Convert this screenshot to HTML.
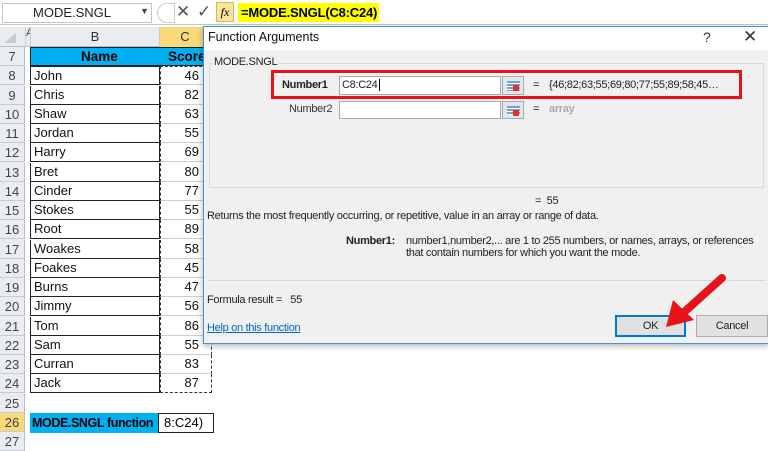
<!DOCTYPE html>
<html><head><meta charset="utf-8"><style>
*{margin:0;padding:0;box-sizing:border-box}
body{width:768px;height:440px;overflow:hidden;background:#fff;font-family:"Liberation Sans",sans-serif;position:relative}
.a{position:absolute;white-space:nowrap}
.rn{position:absolute;left:0;width:25px;height:19px;background:#e9edf2;color:#444;font-size:13px;text-align:center;line-height:19px;border-bottom:1px solid #c8ccd2;border-right:1px solid #b8bcc2}
.nm{position:absolute;left:30px;width:130px;height:19px;border:1px solid #222;border-top:none;font-size:13px;line-height:18px;padding-left:3px;color:#111}
.sc{position:absolute;left:160px;width:52px;height:19px;border-right:1px dashed #333;border-left:1px dashed #333;border-bottom:1px solid #ccc;font-size:13px;line-height:18px;text-align:right;padding-right:12px;color:#111}
.dl{font-family:"Liberation Sans",sans-serif;font-size:11px;letter-spacing:-0.3px;color:#222}
</style></head><body>
<!-- formula bar -->
<div class="a" style="left:0;top:0;width:768px;height:25px;background:#fff;border-bottom:1px solid #c6c6c6"></div>
<div class="a" style="left:2px;top:3px;width:150px;height:20px;border:1px solid #c6c6c6;font-size:13px;line-height:18px;padding-left:30px;color:#222">MODE.SNGL</div>
<div class="a" style="left:140px;top:6px;font-size:9px;color:#444">▼</div>
<div class="a" style="left:157px;top:3px;width:18px;height:20px;border:1px solid #ccc;border-radius:10px 0 0 10px"></div>
<div class="a" style="left:176px;top:2px;font-size:17px;color:#555">✕</div>
<div class="a" style="left:197px;top:2px;font-size:17px;color:#555">✓</div>
<div class="a" style="left:216px;top:2px;width:18px;height:20px;background:#f7e59c;border:1px solid #d0b860;font-family:'Liberation Serif',serif;font-style:italic;font-size:12px;line-height:18px;text-align:center">fx</div>
<div class="a" style="left:238px;top:3px;width:141px;height:19px;background:#ffff00;font-weight:bold;font-size:13px;line-height:19px;padding-left:3px;letter-spacing:-0.2px">=MODE.SNGL(C8:C24)</div>
<!-- column headers -->
<div class="a" style="left:0;top:27px;width:768px;height:20px;background:#e9edf2;border-bottom:1px solid #b8bcc2"></div>
<div class="a" style="left:25px;top:27px;width:5px;height:20px;border-left:1px solid #c8ccd2;font-size:11px;color:#444;overflow:hidden">A</div>
<div class="a" style="left:30px;top:27px;width:130px;height:20px;border-left:1px solid #c8ccd2;border-right:1px solid #c8ccd2;font-size:13px;line-height:20px;text-align:center;color:#333">B</div>
<div class="a" style="left:160px;top:27px;width:50px;height:20px;background:#f9d97a;font-size:13px;line-height:20px;text-align:center;color:#333">C</div>
<div class="a" style="left:4px;top:33px;width:0;height:0;border-left:12px solid transparent;border-bottom:10px solid #c8ccd2"></div>
<div class="a" style="left:0;top:47px;width:25px;height:393px;background:#e9edf2"></div>
<!-- rows -->
<div class="rn" style="top:47px">7</div>
<div class="a" style="left:30px;top:47px;width:182px;height:19px;background:#00b0f0;border:1px solid #222;font-weight:bold;font-size:13.5px;line-height:18px"><span style="position:absolute;left:50px">Name</span><span style="position:absolute;left:137px">Score</span></div>
<div class="rn" style="top:66px">8</div><div class="nm" style="top:66px;border-top:1px solid #222">John</div><div class="sc" style="top:66px;border-top:1px dashed #333">46</div>
<div class="rn" style="top:86px">9</div><div class="nm" style="top:86px">Chris</div><div class="sc" style="top:86px">82</div>
<div class="rn" style="top:105px">10</div><div class="nm" style="top:105px">Shaw</div><div class="sc" style="top:105px">63</div>
<div class="rn" style="top:124px">11</div><div class="nm" style="top:124px">Jordan</div><div class="sc" style="top:124px">55</div>
<div class="rn" style="top:143px">12</div><div class="nm" style="top:143px">Harry</div><div class="sc" style="top:143px">69</div>
<div class="rn" style="top:163px">13</div><div class="nm" style="top:163px">Bret</div><div class="sc" style="top:163px">80</div>
<div class="rn" style="top:182px">14</div><div class="nm" style="top:182px">Cinder</div><div class="sc" style="top:182px">77</div>
<div class="rn" style="top:201px">15</div><div class="nm" style="top:201px">Stokes</div><div class="sc" style="top:201px">55</div>
<div class="rn" style="top:220px">16</div><div class="nm" style="top:220px">Root</div><div class="sc" style="top:220px">89</div>
<div class="rn" style="top:240px">17</div><div class="nm" style="top:240px">Woakes</div><div class="sc" style="top:240px">58</div>
<div class="rn" style="top:259px">18</div><div class="nm" style="top:259px">Foakes</div><div class="sc" style="top:259px">45</div>
<div class="rn" style="top:278px">19</div><div class="nm" style="top:278px">Burns</div><div class="sc" style="top:278px">47</div>
<div class="rn" style="top:297px">20</div><div class="nm" style="top:297px">Jimmy</div><div class="sc" style="top:297px">56</div>
<div class="rn" style="top:317px">21</div><div class="nm" style="top:317px">Tom</div><div class="sc" style="top:317px">86</div>
<div class="rn" style="top:336px">22</div><div class="nm" style="top:336px">Sam</div><div class="sc" style="top:336px">55</div>
<div class="rn" style="top:355px">23</div><div class="nm" style="top:355px">Curran</div><div class="sc" style="top:355px">83</div>
<div class="rn" style="top:374px">24</div><div class="nm" style="top:374px">Jack</div><div class="sc" style="top:374px;border-bottom:1px dashed #333">87</div>
<div class="rn" style="top:394px">25</div>
<div class="rn" style="top:413px;background:#f9d97a">26</div>
<div class="rn" style="top:432px">27</div>
<div class="a" style="left:30px;top:413px;width:128px;height:20px;background:#00b0f0;font-weight:bold;font-size:12.5px;line-height:20px;padding-left:2px;letter-spacing:-0.4px;overflow:hidden">MODE.SNGL function</div>
<div class="a" style="left:158px;top:413px;width:56px;height:20px;border:1px solid #222;font-size:13px;line-height:18px;padding-left:5px">8:C24)</div>
<!-- dialog -->
<div class="a" style="left:203px;top:26px;width:566px;height:318px;background:#f0f0f0;border:1px solid #4a90d9;box-shadow:0 2px 6px rgba(0,0,0,.3)"></div>
<div class="a" style="left:204px;top:27px;width:564px;height:23px;background:#fff"></div>
<div class="a" style="left:208px;top:30px;font-size:12.5px;color:#111">Function Arguments</div>
<div class="a" style="left:703px;top:29px;font-size:14px;color:#333">?</div>
<div class="a" style="left:743px;top:27px;font-size:17px;color:#333">✕</div>
<div class="a" style="left:209px;top:63px;width:555px;height:125px;border:1px solid #d8d8d8"></div>
<div class="a dl" style="left:212px;top:56px;background:#f0f0f0;padding:0 2px">MODE.SNGL</div>
<div class="a" style="left:271px;top:70px;width:471px;height:29px;border:3px solid #e8121a"></div>
<div class="a dl" style="left:282px;top:79px;font-weight:bold">Number1</div>
<div class="a" style="left:339px;top:76px;width:162px;height:19px;background:#fff;border:1px solid #aaa"></div>
<div class="a dl" style="left:342px;top:79px">C8:C24<span style="border-left:1px solid #000;margin-left:1px"></span></div>
<div class="a" style="left:502px;top:76px;width:22px;height:19px;background:#dfe6ee;border:1px solid #aaa"><div style="margin:4px 4px;width:13px;height:10px;background:repeating-linear-gradient(#7aa0c8 0 2px,#fff 2px 3px)"></div><div style="position:absolute;left:10px;top:8px;width:6px;height:6px;background:#d33"></div></div>
<div class="a dl" style="left:533px;top:79px">=</div>
<div class="a dl" style="left:549px;top:79px">{46;82;63;55;69;80;77;55;89;58;45…</div>
<div class="a dl" style="left:289px;top:103px;color:#333">Number2</div>
<div class="a" style="left:339px;top:101px;width:162px;height:18px;background:#fff;border:1px solid #aaa"></div>
<div class="a" style="left:502px;top:101px;width:22px;height:18px;background:#dfe6ee;border:1px solid #aaa"><div style="margin:4px 4px;width:13px;height:9px;background:repeating-linear-gradient(#7aa0c8 0 2px,#fff 2px 3px)"></div><div style="position:absolute;left:10px;top:8px;width:6px;height:6px;background:#d33"></div></div>
<div class="a dl" style="left:533px;top:103px">=</div>
<div class="a dl" style="left:549px;top:103px;color:#aaa;font-weight:bold">array</div>
<div class="a dl" style="left:535px;top:195px">=&nbsp;&nbsp;55</div>
<div class="a dl" style="left:207px;top:210px">Returns the most frequently occurring, or repetitive, value in an array or range of data.</div>
<div class="a dl" style="left:346px;top:235px;font-weight:bold">Number1:</div>
<div class="a dl" style="left:406px;top:235px">number1,number2,... are 1 to 255 numbers, or names, arrays, or references</div>
<div class="a dl" style="left:406px;top:247px">that contain numbers for which you want the mode.</div>
<div class="a" style="left:208px;top:280px;width:558px;height:1px;background:#d8d8d8"></div>
<div class="a dl" style="left:207px;top:294px">Formula result =&nbsp;&nbsp;&nbsp;55</div>
<div class="a dl" style="left:207px;top:322px;color:#0066cc;text-decoration:underline">Help on this function</div>
<div class="a dl" style="left:615px;top:315px;width:71px;height:22px;background:#e1e1e1;border:2px solid #0078d7;text-align:center;line-height:18px">OK</div>
<div class="a dl" style="left:696px;top:315px;width:72px;height:22px;background:#e1e1e1;border:1px solid #adadad;text-align:center;line-height:20px">Cancel</div>
<svg class="a" style="left:0;top:0" width="768" height="440"><line x1="722" y1="278" x2="682" y2="314" stroke="#e8121a" stroke-width="8" stroke-linecap="round"/><polygon points="666,327 673,300 694,320" fill="#e8121a"/></svg>
</body></html>
